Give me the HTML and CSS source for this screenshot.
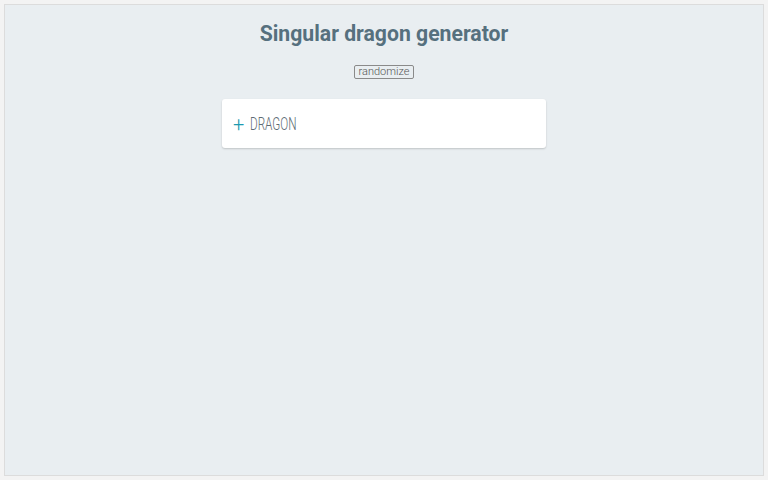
FILE: index.html
```html
<!DOCTYPE html>
<html lang="en">
<head>
    <meta charset="UTF-8">
    <meta name="viewport" content="width=device-width, initial-scale=1.0">
    <link rel="stylesheet" href="styles.css">
    <title>Singular dragon generator</title>
</head>
<body>
    <div class="frame">
        <h1 class="title">Singular dragon generator</h1>
        <div class="controls">
            <button class="randomize">randomize</button>
        </div>
        <div class="card">
            <span class="plus">+</span>
            <span class="label">DRAGON</span>
        </div>
    </div>
</body>
</html>
```
FILE: styles.css
```css
html, body {
    height: 100%;
}
body {
    margin: 0;
    padding: 4px;
    box-sizing: border-box;
    background-color: #f3f3f3;
    font-family: Roboto, "Liberation Sans", sans-serif;
}
.frame {
    height: 100%;
    box-sizing: border-box;
    border: 1px solid #dcdcdc;
    background-color: #e9eef1;
    display: flex;
    flex-direction: column;
    align-items: center;
}
.title {
    margin: 16px 0 0 0;
    font-size: 21.2px;
    line-height: 26px;
    font-weight: bold;
    color: #56707e;
}
.controls {
    margin-top: 18px;
}
.randomize {
    display: block;
    font-family: Roboto, sans-serif;
    font-weight: 300;
    font-size: 11px;
    line-height: 12px;
    color: #555;
    background: transparent;
    border: 1px solid #8a8a8a;
    border-radius: 2px;
    padding: 0 4px;
}
.card {
    margin-top: 20px;
    width: 324px;
    height: 49px;
    box-sizing: border-box;
    background: #ffffff;
    border-radius: 3px;
    box-shadow: 0 1px 2px rgba(0, 0, 0, 0.18);
    display: flex;
    align-items: center;
    padding-left: 11px;
}
.plus {
    color: #1d9ab0;
    font-size: 20px;
    font-weight: 300;
    line-height: 20px;
    margin-right: 6px;
}
.label {
    display: inline-block;
    font-family: Roboto, sans-serif;
    font-weight: 300;
    font-size: 18px;
    color: #5d6b74;
    transform: scaleX(0.65);
    transform-origin: left center;
}
```
